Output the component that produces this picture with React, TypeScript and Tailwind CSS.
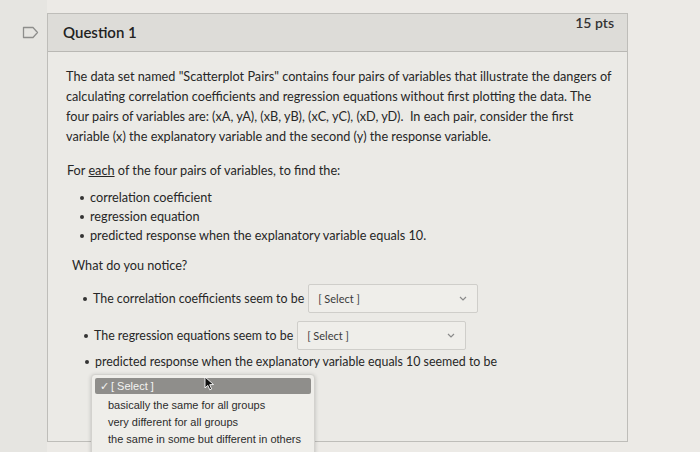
import React from "react";

const FONT = { fontFamily: "Lato, 'Open Sans', sans-serif" };
const SYS = { fontFamily: "'Liberation Sans', Arial, sans-serif" };

function QuestionIcon() {
  return (
    <svg width="17" height="13" viewBox="0 0 17 13" fill="none">
      <path
        d="M1.5 1.5 H11 L15.5 6.5 L11 11.5 H1.5 Z"
        stroke="#8e8e8c"
        strokeWidth="1.3"
        strokeLinejoin="round"
      />
    </svg>
  );
}

function Chevron() {
  return (
    <svg width="8" height="5" viewBox="0 0 8 5" fill="none">
      <path d="M1 1 L4 4 L7 1" stroke="#8a8a8a" strokeWidth="1.2" />
    </svg>
  );
}

function Cursor() {
  return (
    <svg width="11" height="15" viewBox="0 0 11 15">
      <path d="M1 1 L1 12 L3.8 9.4 L5.8 13.8 L7.6 13 L5.7 8.7 L9.5 8.5 Z" fill="#111" stroke="#fff" strokeWidth="0.9" />
    </svg>
  );
}

function SelectBox({ width }: { width: string }) {
  return (
    <div
      className={`${width} h-[29px] -ml-[2px] border border-[#cfceca] bg-[#efeeea] rounded-[2px] flex items-center justify-between pl-[9px] pr-[10px]`}
    >
      <span className="text-[11px] text-[#3a3a3a]">[ Select ]</span>
      <Chevron />
    </div>
  );
}

export default function App() {
  const options = [
    "basically the same for all groups",
    "very different for all groups",
    "the same in some but different in others",
  ];

  return (
    <div className="w-[700px] h-[452px] bg-[#eceae6] relative overflow-hidden text-[#272727]" style={FONT}>
      <div className="flex h-full">
        {/* left rail */}
        <div className="w-[47px] shrink-0 bg-[#e6e5e1] flex justify-end pr-[8px] pt-[26px]">
          <QuestionIcon />
        </div>

        {/* question card */}
        <div className="mt-[13px] w-[581px] h-[429px] border border-[#bebdb9] bg-[#ebeae6] flex flex-col">
          <div className="h-[38px] bg-[#dddcd8] border-b border-[#b9b8b4] flex justify-between pl-[15px] pr-[13px]">
            <span className="self-center text-[15px] font-semibold text-[#222]">Question 1</span>
            <span className="pt-[1px] text-[14px] leading-[16px] font-semibold text-[#333]">15 pts</span>
          </div>

          <div className="pl-[18px] pt-[14px] text-[12.7px] leading-[20px]">
            <p>
              The data set named "Scatterplot Pairs" contains four pairs of variables that illustrate the dangers of
              <br />
              calculating correlation coefficients and regression equations without first plotting the data. The
              <br />
              four pairs of variables are: (xA, yA), (xB, yB), (xC, yC), (xD, yD).&nbsp; In each pair, consider the first
              <br />
              variable (x) the explanatory variable and the second (y) the response variable.
            </p>

            <p className="mt-[14px] pl-[1px]">
              For <span className="underline">each</span> of the four pairs of variables, to find the:
            </p>

            <ul className="mt-[8px] pl-[14px] leading-[19px]">
              {["correlation coefficient", "regression equation", "predicted response when the explanatory variable equals 10."].map(
                (t) => (
                  <li key={t} className="flex items-center gap-[6px]">
                    <span className="w-[4px] h-[4px] rounded-full bg-[#333]" />
                    <span>{t}</span>
                  </li>
                )
              )}
            </ul>

            <p className="mt-[10px] pl-[6px]">What do you notice?</p>

            <ul className="mt-[9px] pl-[17px] text-[12.4px]">
              <li className="flex items-center gap-[6px]">
                <span className="w-[4px] h-[4px] rounded-full bg-[#333]" />
                <span>The correlation coefficients seem to be</span>
                <SelectBox width="w-[170px]" />
              </li>
              <li className="flex items-center gap-[6px] mt-[8px] ml-[1px]">
                <span className="w-[4px] h-[4px] rounded-full bg-[#333]" />
                <span>The regression equations seem to be</span>
                <SelectBox width="w-[169px]" />
              </li>
              <li className="flex items-center gap-[6px] mt-[2px] ml-[2px]">
                <span className="w-[4px] h-[4px] rounded-full bg-[#333]" />
                <span>predicted response when the explanatory variable equals 10 seemed to be</span>
              </li>
            </ul>
          </div>
        </div>
      </div>

      {/* open dropdown */}
      <div
        className="absolute left-[91px] top-[374px] w-[224px] h-[84px] bg-[#efeeea] border border-[#d3d2ce] rounded-[4px] shadow-[0_1px_4px_rgba(0,0,0,0.2)] p-[3px] text-[11px]"
        style={SYS}
      >
        <div className="h-[16px] bg-[#8f8e8b] rounded-[2px] flex items-center text-[#f4f4f2] pl-[5px]">
          <span className="w-[11px]">✓</span>
          <span>[ Select ]</span>
        </div>
        <div className="pl-[13px] pt-[3px] leading-[17px] text-[#2c2c2c]">
          {options.map((o) => (
            <div key={o}>{o}</div>
          ))}
        </div>
      </div>

      <div className="absolute left-[204px] top-[376px]">
        <Cursor />
      </div>
    </div>
  );
}
